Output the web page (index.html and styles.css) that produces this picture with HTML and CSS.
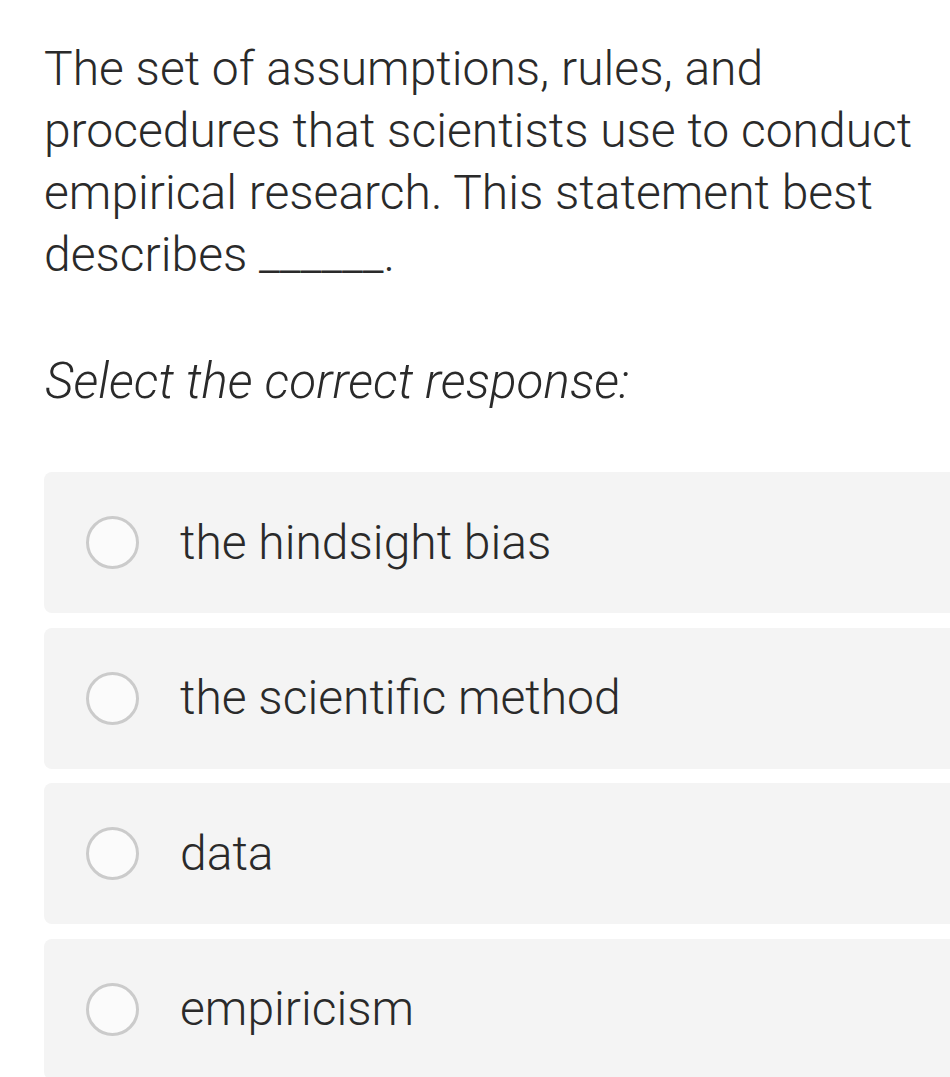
FILE: index.html
```html
<!DOCTYPE html>
<html>
<head>
<meta charset="utf-8">
<link rel="stylesheet" href="styles.css">
</head>
<body>
<div class="page">
  <p class="question">The set of assumptions, rules, and procedures that scientists use to conduct empirical research. This statement best describes ______.</p>
  <p class="prompt">Select the correct response:</p>
  <div class="options">
    <div class="option"><span class="radio"></span><span class="label">the hindsight bias</span></div>
    <div class="option"><span class="radio"></span><span class="label">the scientific method</span></div>
    <div class="option"><span class="radio"></span><span class="label">data</span></div>
    <div class="option"><span class="radio"></span><span class="label">empiricism</span></div>
  </div>
</div>
</body>
</html>
```
FILE: styles.css
```css
html, body {
  margin: 0;
  padding: 0;
  background: #ffffff;
  overflow: hidden;
}
.page {
  font-family: "Roboto Light", Roboto, "Noto Sans", sans-serif;
  font-weight: 300;
  color: #2a2a2a;
  padding: 38px 0 0 44px;
}
.question {
  margin: 0;
  font-size: 48px;
  line-height: 62px;
  width: 890px;
}
.prompt {
  margin: 64px 0 0 1px;
  font-size: 49.5px;
  line-height: 62px;
  font-style: italic;
}
.options {
  margin-top: 60px;
  margin-right: -30px;
  display: flex;
  flex-direction: column;
  gap: 14.5px;
}
.option {
  height: 141px;
  background: #f4f4f4;
  border-radius: 8px;
  display: flex;
  align-items: center;
  padding-left: 42px;
}
.radio {
  width: 47px;
  height: 47px;
  border: 3px solid #cbcbcb;
  border-radius: 50%;
  background: #fbfbfb;
  flex: none;
}
.label {
  margin-left: 41px;
  font-size: 48px;
  line-height: 62px;
}
```
